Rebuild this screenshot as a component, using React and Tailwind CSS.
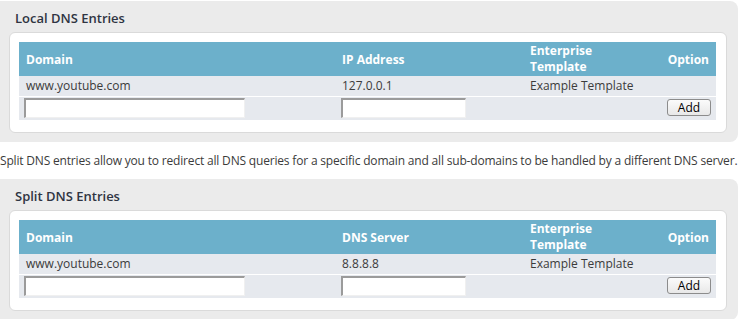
import React from "react";

const font = { fontFamily: '"Open Sans", "DejaVu Sans", sans-serif' };

const localRows = [{ domain: "www.youtube.com", value: "127.0.0.1", template: "Example Template" }];
const splitRows = [{ domain: "www.youtube.com", value: "8.8.8.8", template: "Example Template" }];

function EntryTable({ valueLabel, rows }) {
  return (
    <table className="w-[697px] table-fixed border-collapse text-[12px]">
      <colgroup>
        <col className="w-[316px]" />
        <col className="w-[188px]" />
        <col className="w-[117px]" />
        <col className="w-[76px]" />
      </colgroup>
      <thead>
        <tr className="h-[34px] bg-[#6cb0cb] text-white font-bold leading-[15px]">
          <th className="text-left pl-[7px] font-bold">Domain</th>
          <th className="text-left pl-[7px] font-bold">{valueLabel}</th>
          <th className="text-left pl-[7px] font-bold leading-[16px]">
            Enterprise
            <br />
            Template
          </th>
          <th className="text-right pr-[7px] font-bold">Option</th>
        </tr>
      </thead>
      <tbody className="text-[#3b3b3b]">
        {rows.map((r) => (
          <tr key={r.domain} className="h-[20px] bg-[#e6e9ee] border-b border-white">
            <td className="pl-[7px]">{r.domain}</td>
            <td className="pl-[7px]">{r.value}</td>
            <td className="pl-[7px]">{r.template}</td>
            <td></td>
          </tr>
        ))}
        <tr className="h-[24px] bg-[#e6e9ee]">
          <td className="pl-[5px]">
            <input
              type="text"
              className="block w-[221px] h-[20px] bg-white border-t-2 border-l-2 border-b border-r border-t-[#9b9b9b] border-l-[#9b9b9b] border-b-[#f0f0f0] border-r-[#f0f0f0] outline-none"
            />
          </td>
          <td className="pl-[6px]">
            <input
              type="text"
              className="block w-[125px] h-[20px] bg-white border-t-2 border-l-2 border-b border-r border-t-[#9b9b9b] border-l-[#9b9b9b] border-b-[#f0f0f0] border-r-[#f0f0f0] outline-none"
            />
          </td>
          <td></td>
          <td className="pr-[5px] text-right">
            <button className="w-[44px] h-[17px] leading-[15px] text-[12px] text-black border border-[#8c8c8c] rounded-[3px] bg-gradient-to-b from-[#fbfbfb] to-[#e8e8e8]">
              Add
            </button>
          </td>
        </tr>
      </tbody>
    </table>
  );
}

function Panel({ title, valueLabel, rows }) {
  return (
    <div className="w-[738px] bg-[#ebebeb] rounded-r-lg pb-[9px]">
      <div className="h-[31px] pt-[9px] pl-[15px] text-[13px] leading-[16px] font-semibold text-[#2f3442]">
        {title}
      </div>
      <div className="ml-[9px] w-[718px] bg-white border border-[#dadada] rounded-md pt-[9px] pl-[9px] pr-[10px] pb-[12px]">
        <EntryTable valueLabel={valueLabel} rows={rows} />
      </div>
    </div>
  );
}

export default function App() {
  return (
    <div className="w-[741px] h-[319px] overflow-hidden bg-white pt-[1px]" style={font}>
      <Panel title="Local DNS Entries" valueLabel="IP Address" rows={localRows} />
      <div className="h-[37px] flex items-center text-[12px] tracking-[-0.18px] text-[#3b3b3b] whitespace-nowrap">
        Split DNS entries allow you to redirect all DNS queries for a specific domain and all sub-domains to be handled by a different DNS server.
      </div>
      <Panel title="Split DNS Entries" valueLabel="DNS Server" rows={splitRows} />
    </div>
  );
}
